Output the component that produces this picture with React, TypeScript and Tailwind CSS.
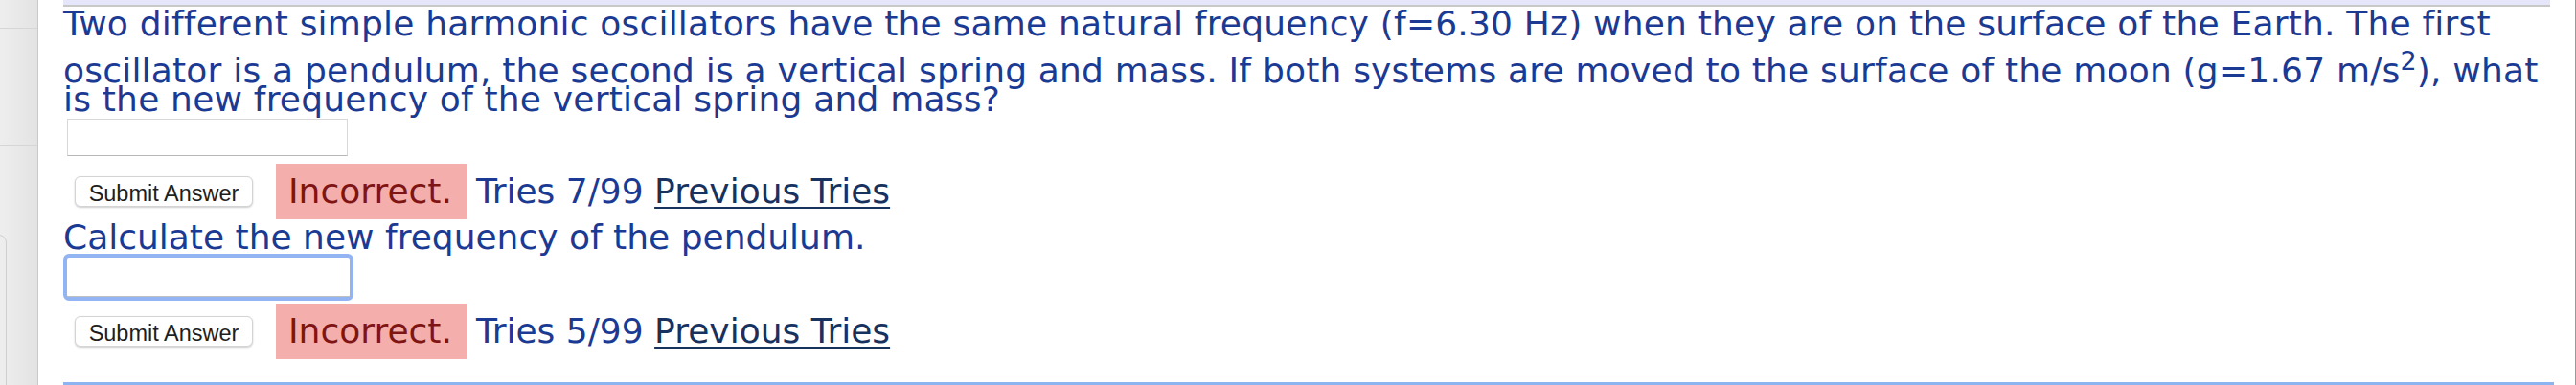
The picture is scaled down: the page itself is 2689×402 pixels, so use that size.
const SubmitRow = ({ tries }: { tries: string }) => (
  <div className="flex items-center h-[58px] pl-[12px]">
    <button className="h-[32px] w-[186px] rounded-[6px] border border-[#d4d4d4] bg-white text-[23.5px] text-[#1e1e1e] shadow-[0_1px_2px_rgba(0,0,0,0.2)] font-['Liberation_Sans',sans-serif]">
      Submit Answer
    </button>
    <div className="ml-[24px] flex items-center text-[36px] text-[#1b3a93] whitespace-pre">
      <span className="bg-[#f4aeab] text-[#7f1414] h-[58px] leading-[58px] pl-[13px] pr-[16px]">
        Incorrect.
      </span>
      <span className="ml-[9px]">Tries {tries} </span>
      <a className="underline underline-offset-[4px] decoration-[2px] text-[#17325f]" href="#">
        Previous Tries
      </a>
    </div>
  </div>
);

export default function App() {
  return (
    <div className="flex w-[2689px] h-[402px] bg-white overflow-hidden font-['DejaVu_Sans',sans-serif] border-r border-[#999]">
      <aside className="relative w-[40px] shrink-0 bg-gradient-to-r from-[#eeeeee] to-[#e3e3e3] border-r border-[#c9c9c9]">
        <div className="h-[30px] border-b border-[#d6d6d6]" />
        <div className="h-[122px] border-b border-[#d6d6d6]" />
        <div className="absolute left-[-10px] top-[245px] w-[17px] h-[200px] rounded-tr-[8px] border border-[#cfcfcf]" />
      </aside>
      <main className="relative flex-1 pl-[26px] pr-[22px]">
        <div className="h-[7px] mr-[4px] bg-[#e6e6fa] border-b-2 border-[#c8c8c8]" />
        <div className="pt-[6px] text-[36px] leading-[23px] tracking-[0.2px] text-[#1b3a93] whitespace-nowrap">
          <p>
            Two different simple harmonic oscillators have the same natural frequency (f=6.30 Hz) when they are on the surface of the Earth. The first
          </p>
          <p className="mt-[26px]">
            oscillator is a pendulum, the second is a vertical spring and mass. If both systems are moved to the surface of the moon (g=1.67 m/s<sup>2</sup>), what
          </p>
          <p className="mt-[7px]">is the new frequency of the vertical spring and mass?</p>
        </div>
        <input className="block mt-[9px] ml-[4px] w-[293px] h-[39px] border border-[#d8d8d8] border-b-[#b8b8b8] outline-none" />
        <div className="mt-[8px]">
          <SubmitRow tries="7/99" />
        </div>
        <p className="mt-[7px] text-[36px] leading-[23px] text-[#1b3a93] whitespace-nowrap">
          Calculate the new frequency of the pendulum.
        </p>
        <div className="mt-[6px] w-[303px] h-[49px] rounded-[6px] border-[4px] border-[#93b4f2] bg-white">
          <input className="block w-full h-full border-b border-[#c0c0c0] outline-none" />
        </div>
        <div className="mt-[3px]">
          <SubmitRow tries="5/99" />
        </div>
        <div className="absolute left-[26px] right-[22px] bottom-0 h-[3px] bg-[#8cb4f0]" />
      </main>
    </div>
  );
}
